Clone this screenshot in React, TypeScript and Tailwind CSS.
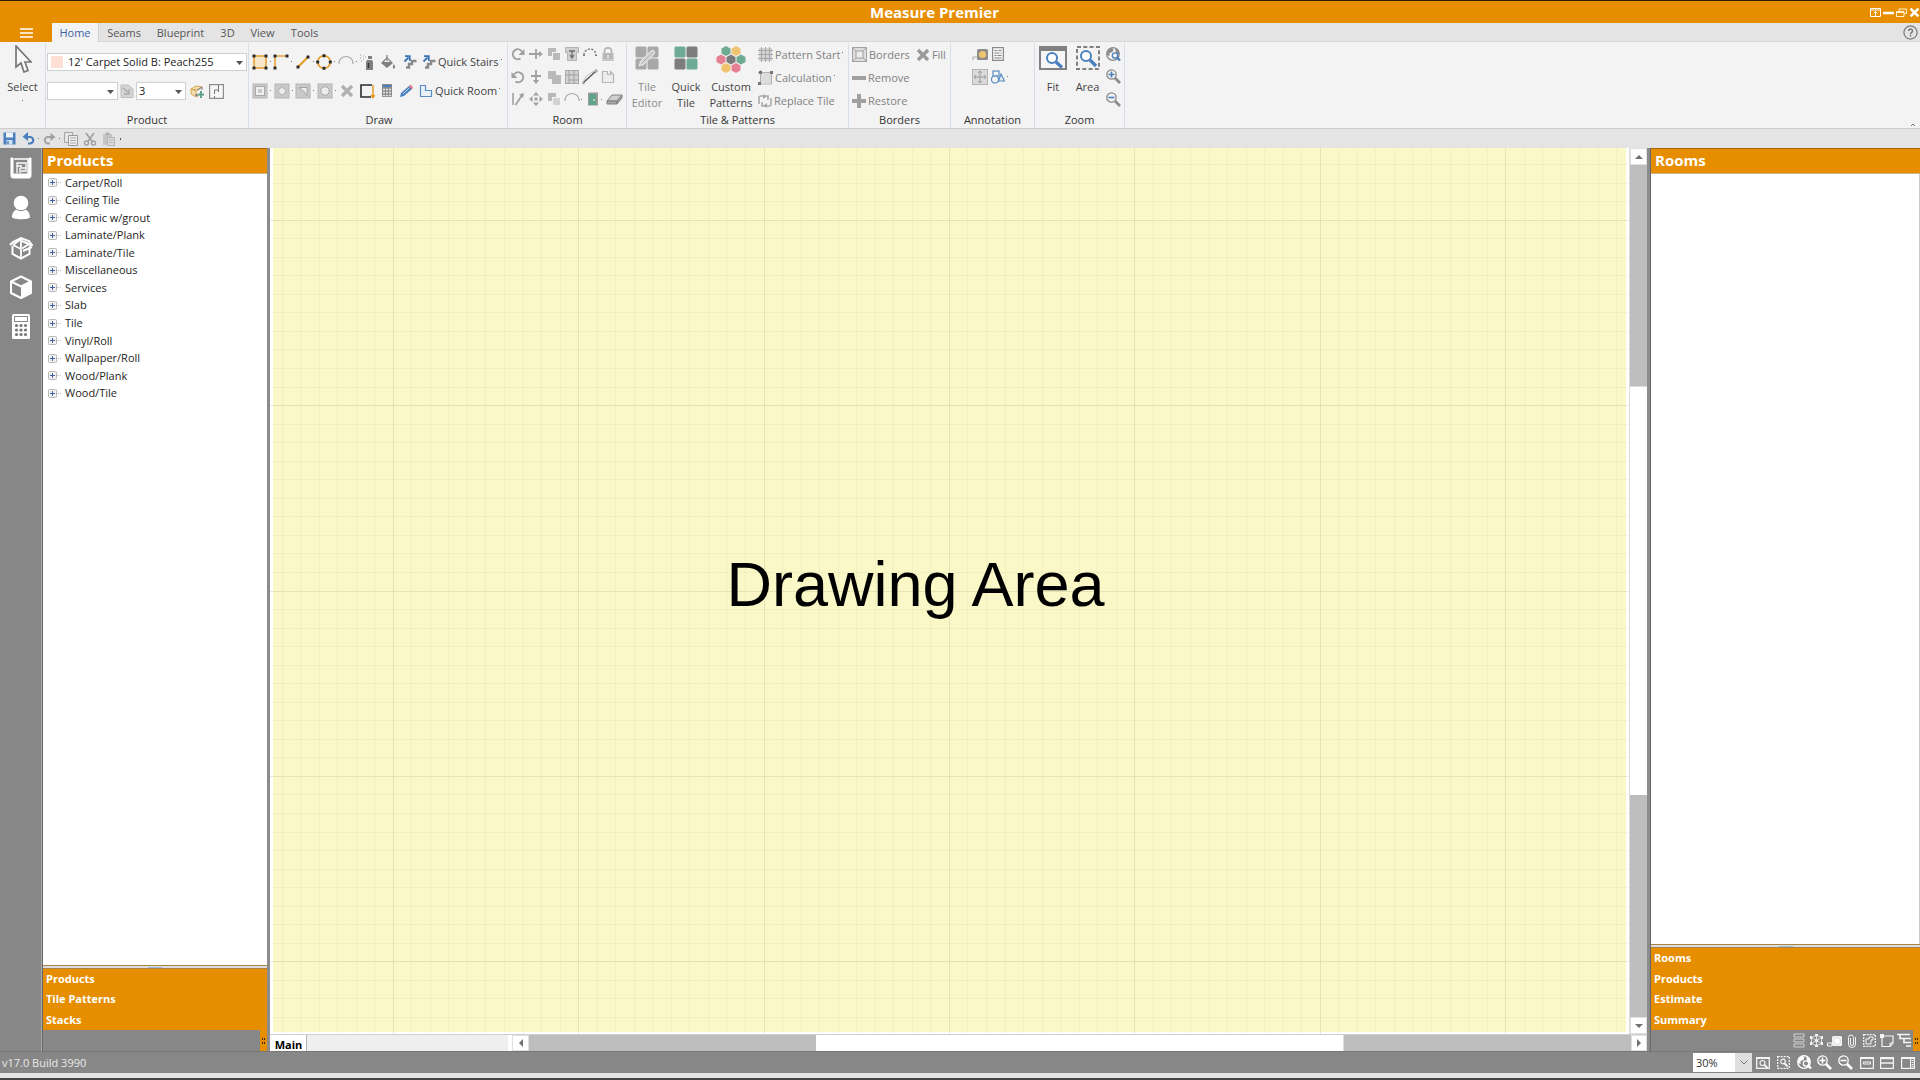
import React from "react";

type Kids = { children: React.ReactNode };

/* ---------- small building blocks ---------- */

function Svg({ s = 16, w, h, vb, children }: Kids & { s?: number; w?: number; h?: number; vb?: string }) {
  const W = w ?? s;
  const H = h ?? s;
  return (
    <svg width={W} height={H} viewBox={vb ?? `0 0 ${W} ${H}`} fill="none" className="block shrink-0" aria-hidden="true">
      {children}
    </svg>
  );
}

function Btn({ label, className = "", children }: Kids & { label: string; className?: string }) {
  return (
    <button type="button" aria-label={label} title={label} className={`flex shrink-0 items-center justify-center ${className}`}>
      {children}
    </button>
  );
}

function Dot() {
  return <span className="block size-px shrink-0 bg-[#777]" />;
}

function Group({ title, className = "", children }: Kids & { title: string; className?: string }) {
  return (
    <section aria-label={title} className={`flex shrink-0 flex-col border-r border-[#d5dfea] ${className}`}>
      <div className="h-[69px] shrink-0">{children}</div>
      <h2 className="text-center leading-4 text-[#333]">{title}</h2>
    </section>
  );
}

function TextBtn({ icon, label, muted = true, dot = false }: { icon: React.ReactNode; label: string; muted?: boolean; dot?: boolean }) {
  return (
    <button type="button" className={`flex h-[23px] items-center gap-[2px] whitespace-nowrap ${muted ? "text-[#818181]" : "text-[#444]"}`}>
      {icon}
      {label}
      {dot && <span className="mb-1 block size-px bg-[#777]" />}
    </button>
  );
}

/* ---------- draw icons ---------- */

const OR = "#e5a336";
const G = "#a0a0a0";
const BL = "#4a80bd";

function Nodes({ pts }: { pts: number[][] }) {
  return <>{pts.map(([x, y], i) => <rect key={i} x={x - 1.5} y={y - 1.5} width="3" height="3" rx="0.5" fill="#2b2b2b" />)}</>;
}
const RectIcon = () => (
  <Svg><rect x="2" y="2" width="12" height="12" stroke={OR} strokeWidth="1.6" fill="#f6e7cb" /><Nodes pts={[[2, 2], [14, 2], [2, 14], [14, 14]]} /></Svg>
);
const CornerIcon = () => (
  <Svg><path d="M2 14V2H15" stroke={OR} strokeWidth="1.6" /><Nodes pts={[[2, 2], [14, 2], [2, 14]]} /></Svg>
);
const LineIcon = () => (
  <Svg><path d="M3 13L13 3" stroke="#e59a1c" strokeWidth="1.8" /><Nodes pts={[[3, 13], [13, 3]]} /></Svg>
);
const CircleIcon = () => (
  <Svg><circle cx="8" cy="8" r="6.3" stroke="#e59a1c" strokeWidth="1.6" /><Nodes pts={[[8, 1.7], [8, 14.3], [1.7, 8], [14.3, 8]]} /></Svg>
);
const ArcIcon = () => (
  <Svg><path d="M1 9A7 6.500 0 0 1 15 9" stroke="#ababab" strokeWidth="1.2" /><path d="M0 9h2M14 9h2" stroke="#ababab" /></Svg>
);
const SprayIcon = () => (
  <Svg><path d="M7 8l1-2h5l1 2v8H7z" fill="#808080" /><rect x="9" y="2" width="4" height="3" fill="#808080" /><path d="M9.500 9v5" stroke="#333" strokeWidth="1.5" /><path d="M1 1h1M4 2h1M1 4h1M4 5h1M2 7h1M6 3h1" stroke="#999" strokeWidth="1.2" /></Svg>
);
const BucketIcon = () => (
  <Svg><path d="M1 9l6-6 6 6-6 5z" fill="#808080" /><path d="M4 8l3-4 3 4z" fill="#f3f3f3" /><path d="M7 1v6" stroke="#808080" strokeWidth="1.3" /><path d="M14 10c1 2 2 3 0 5-2-2-1-3 0-5z" fill="#808080" /></Svg>
);
const StairsIcon = () => (
  <Svg s={14}><path d="M3 12.500h3V9h3V6h4.500" stroke="#8a8a8a" strokeWidth="2.400" /><path d="M1.500 6.500L5.500 2.500M2 1.200h4.800V6" stroke="#3d74b5" strokeWidth="1.800" /></Svg>
);
function CutIcon({ kind }: { kind: number }) {
  return (
    <Svg>
      <rect x="1" y="1" width="14" height="14" fill="#c9c9c9" stroke="#b4b4b4" />
      {kind === 0 && <rect x="5" y="5" width="6" height="6" fill="#c9c9c9" stroke="#f0f0f0" strokeWidth="2" />}
      {kind === 0 && <rect x="3.500" y="3.500" width="9" height="9" stroke="#a8a8a8" />}
      {kind === 1 && <path d="M8 3.500L12.500 8 8 12.500 3.500 8z" fill="#ececec" stroke="#a5a5a5" />}
      {kind === 2 && <path d="M4 4.500h8v8L8.500 8z" fill="#ececec" stroke="#a5a5a5" />}
      {kind === 3 && <circle cx="8" cy="8" r="4.300" fill="#ececec" stroke="#a5a5a5" />}
    </Svg>
  );
}
const XIcon = ({ c = "#b0b0b0", s = 14 }: { c?: string; s?: number }) => (
  <Svg s={s} vb="0 0 14 14"><path d="M2 2l10 10M12 2L2 12" stroke={c} strokeWidth="3.400" /></Svg>
);
const FrameIcon = () => (
  <Svg><path d="M12 14H2V2h11" stroke="#2b2b2b" strokeWidth="1.600" /><path d="M14 2v12M12 12l2 2.500 2-2.500" stroke="#e59a1c" strokeWidth="1.500" /></Svg>
);
const CalcIcon = () => (
  <Svg w={12} h={15}><rect x="1" y="1" width="10" height="13" fill="#8b8b8b" /><rect x="2" y="2" width="8" height="2" fill={BL} /><path d="M2 6.500h8M2 9.500h8M2 12.500h8" stroke="#e6e6e6" strokeWidth="1.600" strokeDasharray="2 1" /></Svg>
);
const PencilIcon = () => (
  <Svg s={14}><path d="M1 13l1-4 8-7 3 3-8 7z" fill={BL} /><path d="M4 10l6-6" stroke="#c4dbf0" /><path d="M10 2l1.500-1 2 2L13 5z" fill="#e28293" stroke="#e28293" /></Svg>
);
const RoomShape = () => (
  <Svg s={14}><path d="M1.500 1.500h5v5h6v6h-11z" fill="#eaf0f7" stroke="#5b8cc4" strokeWidth="1.200" /></Svg>
);

/* ---------- room icons ---------- */

const RotCw = () => (
  <Svg s={14}><path d="M11 4.500A5 5 0 1 0 9.500 11.500" stroke={G} strokeWidth="2" /><path d="M7.500 8h6V2z" fill={G} /></Svg>
);
const RotCcw = () => (
  <Svg s={14}><path d="M3 4.500A5 5 0 1 1 4.500 11.500" stroke={G} strokeWidth="2" /><path d="M6.500 8h-6V2z" fill={G} /></Svg>
);
const FlipH = () => (
  <Svg s={14}><path d="M0 7h11M7 2v10" stroke={G} strokeWidth="1.800" /><path d="M10 4l4 3-4 3z" fill={G} /></Svg>
);
const FlipV = () => (
  <Svg s={14}><path d="M7 0v11M2 6h10" stroke={G} strokeWidth="1.800" /><path d="M4 10l3 4 3-4z" fill={G} /></Svg>
);
const Squares = ({ light = false, merged = false }: { light?: boolean; merged?: boolean }) => (
  <Svg s={14}><rect x="1" y="1" width="8" height="8" fill="#b9b9b9" /><rect x="5.500" y="5.500" width="8" height="8" fill={light ? "#d3d3d3" : "#b9b9b9"} stroke={merged ? "#b9b9b9" : "#f3f3f3"} /></Svg>
);
const DropIn = () => (
  <Svg s={14}><path d="M.5.500h13v5h-2v8h-9v-8h-2z" fill="#d0d0d0" stroke="#b4b4b4" /><path d="M4 4h6M7 4v6M5 8l2 3 2-3" stroke="#6e6e6e" strokeWidth="1.300" /></Svg>
);
const DashArc = () => (
  <Svg s={14}><path d="M1 8A6 6 0 0 1 13 8" stroke="#777" strokeDasharray="2 1.500" strokeWidth="1.400" /><path d="M0 8.500h2M12 8.500h2" stroke="#777" /></Svg>
);
const LockIcon = () => (
  <Svg s={14}><path d="M3.500 6V4a3.500 3.200 0 0 1 7 0v2" stroke="#b4b4b4" strokeWidth="1.800" /><rect x="1.500" y="6" width="11" height="8" fill="#b8b8b8" /><path d="M2 13h10" stroke="#d6d6d6" /><path d="M7 8v3" stroke="#eee" strokeWidth="1.300" /></Svg>
);
const PatternBox = () => (
  <Svg s={14}><rect x=".5" y=".5" width="13" height="13" fill="#d2d2d2" stroke="#a8a8a8" /><path d="M4 1v9h9M1 5h8v8M9 1v4h4M4 10v3" stroke="#a0a0a0" /></Svg>
);
const Chord = () => (
  <Svg><path d="M1 14L14 2" stroke="#555" strokeWidth="1.400" /><path d="M1 14C2 8 8 3 14 2" stroke="#bdbdbd" /><circle cx="14" cy="2" r="1.200" stroke="#888" fill="#fff" /><circle cx="1.500" cy="14" r="1.200" fill="#999" /></Svg>
);
const PageCut = () => (
  <Svg s={14}><path d="M1.500 1.500h5v3h3v-3l3 3v8h-11z" stroke="#b5b5b5" fill="#ededed" strokeWidth="1.200" /></Svg>
);
const Slant = () => (
  <Svg s={14}><path d="M2 1v12" stroke={G} strokeWidth="1.600" /><path d="M4.500 13l6-9" stroke={G} strokeWidth="1.800" /><path d="M8 2.500L13 1l-1 5z" fill={G} /></Svg>
);
const Move = () => (
  <Svg s={14}><path d="M7 0l3 3.500H4zM7 14l3-3.500H4zM0 7l3.500 3V4zM14 7l-3.500 3V4z" fill={G} /><rect x="5.500" y="5.500" width="3" height="3" fill={G} /></Svg>
);
const Door = () => (
  <Svg w={12} h={14}><rect x="1" y=".5" width="10" height="13" fill="#9b9b9b" /><path d="M2 2h7v11H2z" fill="#5fa388" /><path d="M7 7v2" stroke="#fff" /></Svg>
);
const Eraser = () => (
  <Svg w={17} h={12}><path d="M1 8l5-6h10l-5 6z" fill="#d0d0d0" stroke="#808080" /><path d="M1 8h10v3H1zM11 8l5-6v3l-5 6z" fill="#a8a8a8" stroke="#808080" /></Svg>
);

/* ---------- tile icons ---------- */

function Tiles({ c, pen = false }: { c: string[]; pen?: boolean }) {
  return (
    <Svg s={24}>
      {c.map((f, i) => <rect key={i} x={(i % 2) * 12 + 0.5} y={Math.floor(i / 2) * 12 + 0.5} width="11" height="11" rx="1.500" fill={f} />)}
      {pen && <><path d="M6 18L18 6" stroke="#f0f0f0" strokeWidth="5" /><path d="M4 20l2-5 10-10a2 2 0 0 1 3 3L9 18z" fill="#c9c9c9" stroke="#eee" /></>}
    </Svg>
  );
}
function Hexes() {
  const items: [number, number, string][] = [
    [10, 5, "#6faa95"], [20, 5, "#efc36f"], [5, 13.5, "#e57f93"], [15, 13.5, "#7b7b7b"], [25, 13.5, "#6faa95"], [10, 22, "#efc36f"], [20, 22, "#e57f93"],
  ];
  return (
    <Svg w={30} h={27}>
      {items.map(([x, y, f], i) => (
        <path key={i} fill={f} d={`M${x} ${y - 5}l4.500 2.500v5l-4.500 2.500l-4.500 -2.500v-5z`} />
      ))}
    </Svg>
  );
}
const GridIcon = () => (
  <Svg s={15}><rect x="1" y="1" width="13" height="13" fill="#d4d4d4" /><path d="M0 3.500h15M0 7.500h15M0 11.500h15M3.500 0v15M7.500 0v15M11.500 0v15" stroke="#a6a6a6" /></Svg>
);
const AreaCalc = () => (
  <Svg s={15}><rect x="3" y="3" width="10" height="10" fill="#dcdcdc" /><path d="M2.500 0v15M0 2.500h15M13.500 2v12H2" stroke="#b2b2b2" /><path d="M1 1h3v3H1zM12 1h3v3h-3zM0 12h3v3H0z" fill="#777" /></Svg>
);
const Replace = () => (
  <Svg s={14}><path d="M5 2H3a2 2 0 0 0-2 2v6M9 12h2a2 2 0 0 0 2-2V4M7 2h3v4M7 12H4V8" stroke="#ababab" strokeWidth="1.600" /><path d="M5 0l4 2.500L5 5zM9 9l-4 2.500L9 14z" fill="#ababab" /></Svg>
);
const BordersIcon = () => (
  <Svg s={15}><rect x=".5" y=".5" width="14" height="14" fill="#dedede" stroke="#a3a3a3" /><rect x="4" y="4" width="7" height="7" fill="#eee" stroke="#a0a0a0" /><path d="M1 1l3 3M14 1l-3 3M1 14l3-3M14 14l-3-3" stroke="#a3a3a3" /></Svg>
);
const Minus = () => <Svg s={14}><path d="M0 7h14" stroke={G} strokeWidth="4" /></Svg>;
const Plus = () => <Svg s={14}><path d="M0 7h14M7 0v14" stroke={G} strokeWidth="4" /></Svg>;

/* ---------- annotation and zoom icons ---------- */

const Tape = () => (
  <Svg w={16} h={13}><rect x="5" y="1" width="11" height="11" rx="1.500" fill="#8d8d8d" /><circle cx="10.500" cy="6.500" r="3.600" fill="#efc36f" /><path d="M1 12V9h4" stroke="#aaa" /></Svg>
);
const Note = () => (
  <Svg w={12} h={14}><rect x=".6" y=".6" width="10.800" height="12.800" fill="#f4f4f4" stroke="#8a8a8a" strokeWidth="1.200" /><path d="M2.500 3.500h3M6.500 3.500h3M2.500 6h5M8.500 6h1M2.500 8.500h2M5.500 8.500h4M2.500 11h7" stroke="#858585" /></Svg>
);
const Cross = () => (
  <Svg><rect x=".5" y=".5" width="15" height="15" fill="#dadada" stroke="#b3b3b3" /><path d="M8 3v10M3 8h10" stroke="#9b9b9b" /><path d="M6 4l2-2 2 2M6 12l2 2 2-2M4 6L2 8l2 2M12 6l2 2-2 2" stroke="#9b9b9b" /></Svg>
);
const Shapes = () => (
  <Svg s={14}><rect x="2" y="1" width="6" height="5" stroke="#5b8cc4" strokeWidth="1.200" /><circle cx="4" cy="9.500" r="3.500" stroke="#5b8cc4" fill="#f3f3f3" strokeWidth="1.200" /><path d="M10 4l3.500 7h-6z" stroke="#5b8cc4" fill="#e4edf6" strokeWidth="1.200" /></Svg>
);
const FitIcon = () => (
  <Svg w={28} h={24}><rect x="1" y="1" width="26" height="22" fill="#f6f6f6" stroke="#808080" strokeWidth="2" /><path d="M0 0h28v5H0z" fill="#808080" /><circle cx="13" cy="12" r="5" stroke={BL} strokeWidth="2" fill="#fff" /><path d="M17 16l6 5.500" stroke={BL} strokeWidth="3.400" /></Svg>
);
const AreaIcon = () => (
  <Svg s={24}><rect x="1" y="1" width="22" height="22" stroke="#808080" strokeWidth="2" strokeDasharray="4 2.300" /><circle cx="10" cy="10" r="5" stroke={BL} strokeWidth="2" fill="#fff" /><path d="M14 14l6 6" stroke={BL} strokeWidth="3.400" /></Svg>
);
function Globe({ c = "#8a8a8a", a = BL, bg = "#f3f3f3" }: { c?: string; a?: string; bg?: string }) {
  return (
    <Svg s={15}>
      <circle cx="7" cy="7" r="6.300" stroke={c} strokeWidth="1.300" />
      <path d="M1.500 4l4-3 2 1-1 3-3 1v3L1 8zM9 1l4 3v4l-3-2z" fill={c} />
      <circle cx="9" cy="8.500" r="2.700" stroke={a} strokeWidth="1.300" fill={bg} />
      <path d="M11 10.500l3 3" stroke={a} strokeWidth="2.400" />
    </Svg>
  );
}
function Lens({ plus = false, c = "#8a8a8a", a = BL }: { plus?: boolean; c?: string; a?: string }) {
  return (
    <Svg s={15}><circle cx="5.500" cy="5.500" r="4.700" stroke={c} strokeWidth="1.300" /><path d="M9 9l5 5" stroke={c} strokeWidth="2.600" /><path d={plus ? "M2.500 5.500h6M5.500 2.500v6" : "M2.500 5.500h6"} stroke={a} strokeWidth="1.600" /></Svg>
  );
}

/* ---------- title, tabs ---------- */

function TitleBar() {
  return (
    <header className="flex h-[23px] shrink-0 items-center border-t border-[#2b1c08] bg-[#e68e00] text-white">
      <h1 className="flex-1 text-center text-[15px] leading-5 font-bold">Measure Premier</h1>
      <div className="flex items-center">
        <Btn label="Ribbon display" className="w-[13px]"><Svg w={11} h={9}><path d="M.5.500h10v8H.5zM.5 2h10M5.500 8V4M3.500 5.500l2-2 2 2" stroke="#fff" /></Svg></Btn>
        <Btn label="Minimize" className="w-[13px]"><Svg w={11} h={9}><path d="M0 5h11" stroke="#fff" strokeWidth="2.500" /></Svg></Btn>
        <Btn label="Restore window" className="w-[13px]"><Svg w={11} h={9}><path d="M3 3V1h7.500v4.500H8M.5 3.500H8v5H.5zM.5 4.500H8" stroke="#fff0d2" /></Svg></Btn>
        <Btn label="Close" className="w-[12px]"><XIcon c="#fff" s={11} /></Btn>
      </div>
    </header>
  );
}

const tabs: [string, string][] = [["Seams", "w-[50px]"], ["Blueprint", "w-[63px]"], ["3D", "w-[31px]"], ["View", "w-[39px]"], ["Tools", "w-[45px]"]];

function TabRow() {
  return (
    <nav aria-label="Ribbon tabs" className="flex h-[19px] shrink-0 bg-[#e4e4e4] text-[#555]">
      <Btn label="Menu" className="w-[52px] bg-[#e68e00]"><Svg w={13} h={10}><path d="M0 1h13M0 5h13M0 9h13" stroke="#fff" strokeWidth="1.500" /></Svg></Btn>
      <div className="flex flex-1 border-b border-[#d8d8d8]">
        <button type="button" className="-mb-px w-[47px] border-r border-[#d0d0d0] bg-[#f3f3f3] pt-px text-[#3d60a4]">Home</button>
        {tabs.map(([t, w]) => <button key={t} type="button" className={`pt-[2px] ${w}`}>{t}</button>)}
        <Btn label="Help" className="mr-[2px] ml-auto"><Svg s={15}><circle cx="7.500" cy="7.500" r="6.600" stroke="#777" strokeWidth="1.200" /><path d="M5.500 6a2 2 0 1 1 3 1.700c-.7.400-1 .7-1 1.500M7.500 10v1.500" stroke="#777" strokeWidth="1.500" /></Svg></Btn>
      </div>
    </nav>
  );
}

/* ---------- ribbon ---------- */

function Drop({ label, value, options, className, pad }: { label: string; value: string; options: string[]; className: string; pad: string }) {
  return (
    <div className={`relative h-[18px] border border-[#cfcfcf] bg-white ${className}`}>
      <select aria-label={label} defaultValue={value} className={`block size-full appearance-none bg-transparent text-[#222] outline-none ${pad}`}>
        {options.map((o) => <option key={o}>{o}</option>)}
      </select>
      <svg width="7" height="4" className="pointer-events-none absolute top-[7px] right-[3px]" aria-hidden="true"><path d="M0 0h7L3.500 4z" fill="#555" /></svg>
    </div>
  );
}

function Cell({ label, dot, children }: Kids & { label: string; dot?: boolean }) {
  return (
    <div className="flex h-4 flex-1 items-center">
      <Btn label={label} className="w-[18px]">{children}</Btn>
      {dot && <span className="ml-px flex"><Dot /></span>}
    </div>
  );
}

function BigBtn({ icon, lines, className }: { icon: React.ReactNode; lines: string[]; className: string }) {
  return (
    <button type="button" className={`flex flex-col items-center pt-[3px] leading-4 ${className}`}>
      <span className="flex h-[33px] items-start">{icon}</span>
      {lines.map((l) => <span key={l}>{l}</span>)}
    </button>
  );
}

function Ribbon() {
  const mutedTiles = ["#a8a8a8", "#a8a8a8", "#a8a8a8", "#a8a8a8"];
  const quickTiles = ["#6faa95", "#7d7d7d", "#7d7d7d", "#6faa95"];
  return (
    <div className="flex h-[87px] shrink-0 border-b border-[#cdcdcd] bg-[#f3f3f3] pt-px">
      <section className="w-[46px] shrink-0 border-r border-[#d5dfea]">
        <button type="button" className="flex w-full flex-col items-center pt-[2px] text-[#444]">
          <Svg w={18} h={28}><path d="M2 1v21l5-4 3 9 4-1.500-3-8.500h6z" fill="#f8f8f8" stroke="#777" strokeWidth="1.700" /></Svg>
          <span className="mt-[6px] leading-4">Select</span>
          <span className="mt-[5px] block size-px bg-[#666]" />
        </button>
      </section>

      <Group title="Product" className="w-[203px]">
        <div className="relative px-px pt-[10px]">
          <Drop label="Product" value="12' Carpet Solid B: Peach255" options={["12' Carpet Solid B: Peach255"]} className="w-full" pad="pl-5" />
          <span className="pointer-events-none absolute top-[13px] left-[5px] size-3 bg-[#fddfd3]" />
        </div>
        <div className="flex items-center px-px pt-[11px]">
          <Drop label="Room product" value="" options={[""]} className="w-[71px]" pad="pl-1" />
          <Btn label="Apply product" className="w-[18px]"><Svg s={14}><path d="M1 1h7l5 4v8.500H1z" fill="#d4d4d4" stroke="#bcbcbc" /><path d="M3 4l6 5M9 5v5H4" stroke="#aaa" strokeWidth="1.300" /></Svg></Btn>
          <Drop label="Layer" value="3" options={["1", "2", "3"]} className="w-[50px]" pad="pl-[2px]" />
          <Btn label="Add product" className="ml-[3px] w-4"><Svg s={14}><path d="M1 5l5-3 6 1-5 3zM1 5v5l5 3V7z" fill="#f4dfb4" stroke="#d6a850" /><path d="M7 6.500l5-3.500v3" stroke="#777" /><path d="M6 10a2 2 0 0 0 2 2" stroke="#777" strokeWidth="1.500" /><path d="M11 7v7M7.500 10.500h6.500" stroke="#5fa388" strokeWidth="2" /></Svg></Btn>
          <Btn label="Plan" className="ml-[3px] w-4"><Svg s={15}><rect x=".6" y=".6" width="13.800" height="13.800" fill="#f7f7f7" stroke="#8c8c8c" strokeWidth="1.200" /><path d="M9.500 1v5h-4v4M5.500 12v2M9.500 6v2" stroke="#777" /></Svg></Btn>
        </div>
      </Group>

      <Group title="Draw" className="w-[259px] pl-[2px]">
        <div className="flex items-center pt-[7px]">
          <div className="flex w-[171px]">
            <Cell label="Rectangle" dot><RectIcon /></Cell>
            <Cell label="Corner" dot><CornerIcon /></Cell>
            <Cell label="Line" dot><LineIcon /></Cell>
            <Cell label="Circle" dot><CircleIcon /></Cell>
            <Cell label="Arc" dot><ArcIcon /></Cell>
            <Cell label="Spray"><SprayIcon /></Cell>
            <Cell label="Fill bucket"><BucketIcon /></Cell>
            <Cell label="Stairs"><StairsIcon /></Cell>
          </div>
          <TextBtn icon={<StairsIcon />} label="Quick Stairs" muted={false} dot />
        </div>
        <div className="flex items-center pt-[6px]">
          <div className="flex w-[86px]">
            <Cell label="Cut rectangle" dot><CutIcon kind={0} /></Cell>
            <Cell label="Cut diamond" dot><CutIcon kind={1} /></Cell>
            <Cell label="Cut corner" dot><CutIcon kind={2} /></Cell>
            <Cell label="Cut circle" dot><CutIcon kind={3} /></Cell>
          </div>
          <div className="flex w-[82px] pr-[2px] pl-px">
            <Cell label="Delete"><XIcon /></Cell>
            <Cell label="Frame"><FrameIcon /></Cell>
            <Cell label="Calculator"><CalcIcon /></Cell>
            <Cell label="Pencil"><PencilIcon /></Cell>
          </div>
          <TextBtn icon={<RoomShape />} label="Quick Room" muted={false} dot />
        </div>
      </Group>

      <Group title="Room" className="w-[119px] pl-px">
        <div className="grid w-[108px] grid-cols-6">
          {([["Rotate right", <RotCw />], ["Flip horizontal", <FlipH />], ["Combine", <Squares />], ["Drop in", <DropIn />], ["Dashed arc", <DashArc />], ["Lock", <LockIcon />]] as [string, React.ReactNode][]).map(([l, ic]) => (
            <Btn key={l} label={l} className="h-[22px]">{ic}</Btn>
          ))}
          {([["Rotate left", <RotCcw />], ["Flip vertical", <FlipV />], ["Overlap", <Squares merged />], ["Pattern", <PatternBox />], ["Chord", <Chord />], ["Page cut", <PageCut />]] as [string, React.ReactNode][]).map(([l, ic]) => (
            <Btn key={l} label={l} className="h-[23px]">{ic}</Btn>
          ))}
        </div>
        <div className="flex h-[22px] items-center">
          <Btn label="Slant" className="w-[18px]"><Slant /></Btn>
          <Btn label="Move" className="w-[18px]"><Move /></Btn>
          <Btn label="Subtract" className="w-[18px]"><Squares light /></Btn>
          <Btn label="Arc side" className="w-[18px]"><ArcIcon /></Btn>
          <Dot />
          <Btn label="Door" className="ml-[3px] w-4"><Door /></Btn>
          <Dot />
          <Btn label="Erase" className="ml-1 w-[17px]"><Eraser /></Btn>
        </div>
      </Group>

      <Group title="Tile & Patterns" className="w-[222px]">
        <div className="flex">
          <BigBtn icon={<Tiles c={mutedTiles} pen />} lines={["Tile", "Editor"]} className="w-10 text-[#8b8b8b]" />
          <BigBtn icon={<Tiles c={quickTiles} />} lines={["Quick", "Tile"]} className="w-[38px] text-[#444]" />
          <BigBtn icon={<Hexes />} lines={["Custom", "Patterns"]} className="w-[52px] text-[#444]" />
          <div className="pl-px">
            <TextBtn icon={<GridIcon />} label="Pattern Start" dot />
            <TextBtn icon={<AreaCalc />} label="Calculation" dot />
            <TextBtn icon={<Replace />} label="Replace Tile" />
          </div>
        </div>
      </Group>

      <Group title="Borders" className="w-[102px]">
        <div className="pl-[3px]">
          <div className="flex gap-[6px]">
            <TextBtn icon={<BordersIcon />} label="Borders" />
            <TextBtn icon={<XIcon c="#9a9a9a" />} label="Fill" />
          </div>
          <TextBtn icon={<Minus />} label="Remove" />
          <TextBtn icon={<Plus />} label="Restore" />
        </div>
      </Group>

      <Group title="Annotation" className="w-[84px]">
        <div className="pl-[20px]">
          <div className="flex h-[22px] items-center"><Btn label="Dimension" className="w-[18px]"><Tape /></Btn><Btn label="Note" className="w-[18px]"><Note /></Btn></div>
          <div className="flex h-[23px] items-center"><Btn label="Position" className="w-[18px]"><Cross /></Btn><Btn label="Shapes" className="w-[18px]"><Shapes /></Btn><Dot /></div>
        </div>
      </Group>

      <Group title="Zoom" className="w-[90px]">
        <div className="flex">
          <BigBtn icon={<FitIcon />} lines={["Fit"]} className="w-9 text-[#444]" />
          <BigBtn icon={<AreaIcon />} lines={["Area"]} className="w-[33px] text-[#444]" />
          <div>
            <Btn label="Zoom extents" className="h-[22px] w-[18px]"><Globe /></Btn>
            <Btn label="Zoom in" className="h-[23px] w-[18px]"><Lens plus /></Btn>
            <Btn label="Zoom out" className="h-[23px] w-[18px]"><Lens /></Btn>
          </div>
        </div>
      </Group>
      <Btn label="Collapse ribbon" className="mt-auto mr-[5px] mb-[2px] ml-auto"><Svg w={4} h={3}><path d="M0 3l2-2 2 2" stroke="#777" /></Svg></Btn>
    </div>
  );
}

function QuickBar() {
  return (
    <div className="flex h-[19px] shrink-0 items-center bg-[#e4e4e4] pl-px">
      <Btn label="Save" className="w-4"><Svg s={13}><path d="M.5.500h12v12H.5z" fill={BL} /><path d="M3 .5h7v5H3z" fill="#eef3f9" /><path d="M3.500 8h6v4.500h-6z" fill="#d6e3f1" /><path d="M5 9v3" stroke={BL} strokeWidth="1.500" /></Svg></Btn>
      <Btn label="Undo" className="ml-[3px] w-4"><Svg s={13}><path d="M3 5h5a3 3 0 0 1 0 6.500H6" stroke={BL} strokeWidth="2.200" /><path d="M6 0v9L.5 4.700z" fill={BL} /></Svg></Btn>
      <span className="ml-[2px]"><Dot /></span>
      <Btn label="Redo" className="ml-[2px] w-4"><Svg s={13}><path d="M10 5H5a3 3 0 0 0 0 6.500h2" stroke={G} strokeWidth="1.800" /><path d="M7.500 1l5 4-5 4z" fill={G} /></Svg></Btn>
      <span className="mr-[3px] ml-[2px]"><Dot /></span>
      <Btn label="Copy" className="w-4"><Svg s={14}><path d="M.5.500h8v10h-8z" fill="#e6e6e6" stroke="#a5a5a5" /><path d="M4.500 3.500h9v10h-9z" fill="#eee" stroke="#9a9a9a" /><path d="M6 6h6M6 8.500h6M6 11h6" stroke="#aaa" /></Svg></Btn>
      <Btn label="Cut" className="ml-[3px] w-4"><Svg s={14}><path d="M3 1l6.500 9M11 1L4.500 10" stroke={G} strokeWidth="1.700" /><circle cx="3.500" cy="11" r="2" stroke={G} strokeWidth="1.400" /><circle cx="10.500" cy="11" r="2" stroke={G} strokeWidth="1.400" /></Svg></Btn>
      <Btn label="Paste" className="ml-[3px] w-4"><Svg s={14}><path d="M1 2h9v11H1z" fill="#c5c5c5" /><path d="M3.500.500h4V3h-4z" fill="#b0b0b0" /><path d="M5.500 5.500h7v8h-7z" fill="#dcdcdc" stroke="#b3b3b3" /><path d="M7 8h4M7 10.500h4" stroke="#b3b3b3" /></Svg></Btn>
      <span className="ml-[3px] block h-[2px] w-px bg-[#555]" />
    </div>
  );
}

/* ---------- left side ---------- */

function Rail() {
  return (
    <nav aria-label="Modules" className="flex w-[42px] shrink-0 flex-col items-center gap-[15px] border-r border-[#a8a8a8] bg-[#878787] pt-2">
      <Btn label="Plans"><Svg s={24}><path d="M2 2h2v16h16V2h2v18a2 2 0 0 1-2 2H4a2 2 0 0 1-2-2z" fill="#fff" stroke="#fff" /><path d="M5 3h14v15" stroke="#fff" strokeWidth="1.500" /><path d="M8 17V7h9v8h-5M8 10h5M11 12h6M11 12v5" stroke="#fff" strokeWidth="1.300" /></Svg></Btn>
      <Btn label="Customers"><Svg w={24} h={26}><circle cx="12" cy="8" r="7.300" fill="#fff" /><path d="M3 22c0-5 4-8 5-7 2 1.500 6 1.500 8 0 1-1 5 2 5 7 0 3-18 3-18 0z" fill="#fff" /></Svg></Btn>
      <Btn label="Open box"><Svg s={24}><path d="M3.500 10v8l8.500 4.500 8.500-4.500v-5" stroke="#fff" strokeWidth="2" /><path d="M1 9l3-3 8-4 8 3 3 4-3 1" stroke="#fff" strokeWidth="2" /><path d="M4 9l8 4v9M4 9l8-6v9" stroke="#fff" strokeWidth="1.800" /><path d="M13 12.500l7-4.500-7-3M14 15l9-4" stroke="#fff" strokeWidth="2" /></Svg></Btn>
      <Btn label="Box"><Svg s={24}><path d="M12 1.500L22 6.500V18l-10 5-10-5V6.500z" stroke="#fff" strokeWidth="2" strokeLinejoin="round" /><path d="M12 12l10-5v11l-10 5z" fill="#fff" /><path d="M2 6.500l10 5 10-5" stroke="#fff" strokeWidth="2" /></Svg></Btn>
      <Btn label="Calculator"><Svg w={18} h={25}><rect width="18" height="25" rx="1.500" fill="#fff" /><rect x="2.500" y="2.500" width="13" height="5" fill="#fff" stroke="#878787" />{[11.5, 16, 20.5].map((y) => [4.5, 9, 13.5].map((x) => <circle key={`${x}-${y}`} cx={x} cy={y} r="1.600" fill="#777" />))}</Svg></Btn>
    </nav>
  );
}

const products = ["Carpet/Roll", "Ceiling Tile", "Ceramic w/grout", "Laminate/Plank", "Laminate/Tile", "Miscellaneous", "Services", "Slab", "Tile", "Vinyl/Roll", "Wallpaper/Roll", "Wood/Plank", "Wood/Tile"];

function PanelTitle({ children }: Kids) {
  return <h2 className="h-[26px] shrink-0 border-t border-b border-t-[#a86a08] border-b-[#c9b48c] bg-[#e68e00] pl-1 text-[15px] leading-[22px] font-bold text-white">{children}</h2>;
}

function Splitter() {
  return (
    <div className="flex h-1 shrink-0 items-center justify-center border-y border-[#a98444] bg-[#d9dde2]">
      <span className="h-px w-[14px] bg-[#9dbbdc]" />
    </div>
  );
}

function Stack({ items, className }: { items: string[]; className: string }) {
  return (
    <div className={`flex shrink-0 flex-col bg-[#e68e00] ${className}`}>
      {items.map((t) => <button key={t} type="button" className="flex-1 pl-[3px] text-left font-bold text-white">{t}</button>)}
    </div>
  );
}

function Grip({ label }: { label: string }) {
  return (
    <Btn label={label} className="h-full w-[7px] bg-[#e68e00]"><Svg w={3} h={6}><path d="M0 1h3M0 5h3" stroke="#3b2a10" strokeWidth="2" strokeDasharray="1 1" /></Svg></Btn>
  );
}

function ProductPanel() {
  return (
    <aside className="flex w-[228px] shrink-0 flex-col border-r-[3px] border-l border-l-[#666] border-r-[#8c8c8c] bg-white">
      <PanelTitle>Products</PanelTitle>
      <div className="min-h-0 flex-1 pl-[5px]">
        <ul className="flex h-[228px] flex-col">
          {products.map((p) => (
            <li key={p} className="flex flex-1">
              <button type="button" className="flex items-center text-[#1e1e1e]">
                <Svg w={9} h={9}><rect x=".5" y=".5" width="8" height="8" rx="1" fill="#f1f1f1" stroke="#b8b8b8" /><path d="M2 4.500h5M4.500 2v5" stroke="#4160a0" /></Svg>
                <span className="mr-1 w-[4px] border-t border-dotted border-[#c9c9c9]" />
                {p}
              </button>
            </li>
          ))}
        </ul>
      </div>
      <Splitter />
      <Stack items={["Products", "Tile Patterns", "Stacks"]} className="h-[61px]" />
      <div className="flex h-[21px] shrink-0 justify-end bg-[#878787]"><Grip label="Configure product buttons" /></div>
    </aside>
  );
}

/* ---------- drawing canvas ---------- */

const STEP = 18.54;

function GridLines() {
  const idx = Array.from({ length: 220 }, (_, i) => i);
  return (
    <svg width="100%" height="100%" className="absolute inset-0" aria-hidden="true" shapeRendering="crispEdges">
      {idx.map((i) => {
        const x = Math.floor(12 + i * STEP);
        const y = Math.floor(16.6 + i * STEP);
        return (
          <g key={i} fill="#6b6b50">
            <rect x={x} y="0" width="1" height="100%" opacity={i % 10 === 6 ? 0.15 : 0.06} />
            <rect x="0" y={y} width="100%" height="1" opacity={i % 10 === 3 ? 0.15 : 0.06} />
          </g>
        );
      })}
    </svg>
  );
}

function Arrow({ label, d, className }: { label: string; d: string; className: string }) {
  return <Btn label={label} className={`border border-[#e0e0e0] bg-white ${className}`}><Svg w={8} h={8}><path d={d} fill="#707070" /></Svg></Btn>;
}

function Workspace() {
  return (
    <main className="flex min-w-0 flex-1 flex-col">
      <div className="flex min-h-0 flex-1">
        <div className="relative min-w-0 flex-1 overflow-hidden bg-white">
          <div className="size-full px-[3px] pb-[2px]"><div className="size-full bg-[#fbf8c8]" /></div>
          <GridLines />
          <div className="absolute inset-0 flex items-center justify-center pr-[68px] pb-[14px]">
            <p className="font-['Liberation_Sans',sans-serif] text-[63px] leading-none text-black">Drawing Area</p>
          </div>
        </div>
        <div className="flex w-[18px] shrink-0 flex-col border-l border-[#dcdcdc] bg-[#bdbdbd]">
          <Arrow label="Scroll up" className="h-[17px]" d="M0 6l4-4 4 4z" />
          <div className="flex-[222]" />
          <div className="flex-[408] border-t border-[#dcdcdc] bg-white" />
          <div className="flex-[223]" />
          <Arrow label="Scroll down" className="h-[17px]" d="M0 2l4 4 4-4z" />
        </div>
      </div>
      <div className="flex h-[17px] shrink-0 border-t border-[#cfcfcf] bg-white">
        <button type="button" className="w-[36px] pt-[2px] pl-px font-bold text-black">Main</button>
        <div className="w-[202px] border-l border-[#b5b5b5] bg-[#efefef]" />
        <div className="w-1" />
        <div className="flex flex-1 bg-[#bdbdbd]">
          <Arrow label="Scroll left" className="w-[17px]" d="M6 0L2 4l4 4z" />
          <div className="flex-[288]" />
          <div className="flex-[527] border-r border-[#dcdcdc] bg-white" />
          <div className="flex-[288]" />
          <Arrow label="Scroll right" className="w-4" d="M2 0l4 4-4 4z" />
        </div>
      </div>
    </main>
  );
}

/* ---------- right side ---------- */

const W = "#f4f4f4";

function RoomPanel() {
  return (
    <aside className="flex w-[273px] shrink-0 flex-col border-l-[3px] border-[#8c8c8c] bg-white">
      <div className="flex min-h-0 flex-1 flex-col border-l border-[#666]">
        <PanelTitle>Rooms</PanelTitle>
        <div className="min-h-0 flex-1 border-r border-[#c9c9c9]" />
        <Splitter />
        <Stack items={["Rooms", "Products", "Estimate", "Summary"]} className="h-[82px]" />
        <div className="flex h-[21px] shrink-0 items-center justify-end bg-[#878787]">
          <Btn label="List" className="w-[18px]"><Svg w={12} h={15}><path d="M1 1h10v3H1zM1 6h10v3H1zM1 11h10v3H1z" stroke="#d0d0d0" /></Svg></Btn>
          <Btn label="Network" className="w-[17px]"><Svg s={13}><path d="M6.500 1v11M1.500 3.500l10 6M11.500 3.500l-10 6M1.500 3.500l5-2 5 2v6l-5 2-5-2z" stroke={W} strokeWidth=".8" /><circle cx="6.500" cy="6.500" r="1.600" fill={W} /><path d="M5 0h3v2H5zM5 11h3v2H5zM0 2h2v3H0zM11 2h2v3h-2zM0 8h2v3H0zM11 8h2v3h-2z" fill={W} /></Svg></Btn>
          <Btn label="Measurements" className="w-[18px]"><Svg w={15} h={12}><rect x="5" y="1" width="10" height="10" rx="1.500" fill={W} /><circle cx="10" cy="6" r="3.500" fill="#fff" stroke="#ddd" /><path d="M.5 11V8H5v3z" stroke={W} /></Svg></Btn>
          <Btn label="Attachments" className="w-[17px]"><Svg w={8} h={14}><path d="M2.500 4v6a1.500 1.500 0 0 0 3 0V3.500a2.500 2.500 0 0 0-5 0V10a3.500 3.500 0 0 0 7 0V3" stroke={W} /></Svg></Btn>
          <Btn label="Selection" className="w-[18px]"><Svg s={13}><rect x=".7" y=".7" width="11.600" height="11.600" stroke={W} strokeWidth="1.300" strokeDasharray="2 1" /><path d="M3 5h3V3h4v3H8v4H3z" stroke={W} /></Svg></Btn>
          <Btn label="Notes" className="w-[17px]"><Svg s={14}><path d="M2 2h11v7l-3 3.500H2z" stroke={W} strokeWidth="1.200" /><path d="M0 0h4v4H0z" fill={W} /><path d="M13 9h-3v4" stroke={W} /></Svg></Btn>
          <Btn label="Hierarchy" className="w-[18px]"><Svg s={15}><path d="M0 1.500h13M2 5.500h12M6 9.500h8M9 13h5M3 2v4M7 6v4" stroke={W} strokeWidth="1.600" /></Svg></Btn>
          <Grip label="Configure room buttons" />
        </div>
      </div>
    </aside>
  );
}

function StatusBar() {
  return (
    <footer className="shrink-0">
      <div className="flex h-[22px] items-center border-t border-[#777] bg-[#878787] pl-[2px] text-[#e9e9e9]">
        <span>v17.0 Build 3990</span>
        <div className="ml-auto flex items-center pr-[2px]">
          <div className="relative h-[19px] w-[59px] bg-white">
            <select aria-label="Zoom level" defaultValue="30%" className="block size-full appearance-none bg-transparent pl-[3px] text-[#333] outline-none"><option>30%</option><option>100%</option></select>
            <span className="pointer-events-none absolute inset-y-0 right-0 flex w-[17px] items-center justify-center bg-[#dfdfdf]"><Svg w={8} h={5}><path d="M.5.500L4 4 7.500.500" stroke="#777" /></Svg></span>
          </div>
          <Btn label="Fit" className="w-[21px]"><Svg w={14} h={12}><rect x=".7" y=".7" width="12.600" height="10.600" stroke={W} strokeWidth="1.300" /><path d="M0 1h14" stroke={W} strokeWidth="2" /><circle cx="6.500" cy="6" r="2.500" stroke={W} strokeWidth="1.200" /><path d="M8.500 8l3 3" stroke={W} strokeWidth="2" /></Svg></Btn>
          <Btn label="Area" className="w-[21px]"><Svg s={13}><rect x=".7" y=".7" width="11.600" height="11.600" stroke={W} strokeWidth="1.300" strokeDasharray="2 1" /><circle cx="6" cy="5.500" r="2.300" stroke={W} strokeWidth="1.200" /><path d="M7.500 7.500l3 3" stroke={W} strokeWidth="2" /></Svg></Btn>
          <Btn label="Extents" className="w-[20px]"><Globe c="#fff" a="#fff" bg="#878787" /></Btn>
          <Btn label="Zoom in" className="w-[21px]"><Lens plus c="#fff" a="#fff" /></Btn>
          <Btn label="Zoom out" className="w-[21px]"><Lens c="#fff" a="#fff" /></Btn>
          <Btn label="Single view" className="w-[21px]"><Svg w={14} h={12}><rect x=".6" y=".6" width="12.800" height="10.800" stroke={W} strokeWidth="1.200" /><path d="M0 1.500h14M3.500 5h7v2h-7z" stroke={W} /></Svg></Btn>
          <Btn label="Split view" className="w-[20px]"><Svg w={14} h={12}><rect x=".6" y=".6" width="12.800" height="10.800" stroke={W} strokeWidth="1.200" /><path d="M0 1.500h14M0 6h14" stroke={W} strokeWidth="1.400" /></Svg></Btn>
          <Btn label="Side view" className="w-[21px]"><Svg w={14} h={12}><rect x=".6" y=".6" width="12.800" height="10.800" stroke={W} strokeWidth="1.200" /><path d="M0 1.500h14" stroke={W} /><path d="M9.500 2v10" stroke={W} /><path d="M11.500 3v8" stroke={W} strokeDasharray="1 1" strokeWidth="2" /></Svg></Btn>
        </div>
      </div>
      <div className="h-[7px] border-b-2 border-[#444] bg-[#e4e4e4]" />
    </footer>
  );
}

export default function App() {
  return (
    <div className="flex h-screen flex-col overflow-hidden bg-[#e4e4e4] font-['Open_Sans',sans-serif] text-[11px] leading-4">
      <TitleBar />
      <TabRow />
      <Ribbon />
      <QuickBar />
      <div className="flex min-h-0 flex-1">
        <Rail />
        <ProductPanel />
        <Workspace />
        <RoomPanel />
      </div>
      <StatusBar />
    </div>
  );
}
